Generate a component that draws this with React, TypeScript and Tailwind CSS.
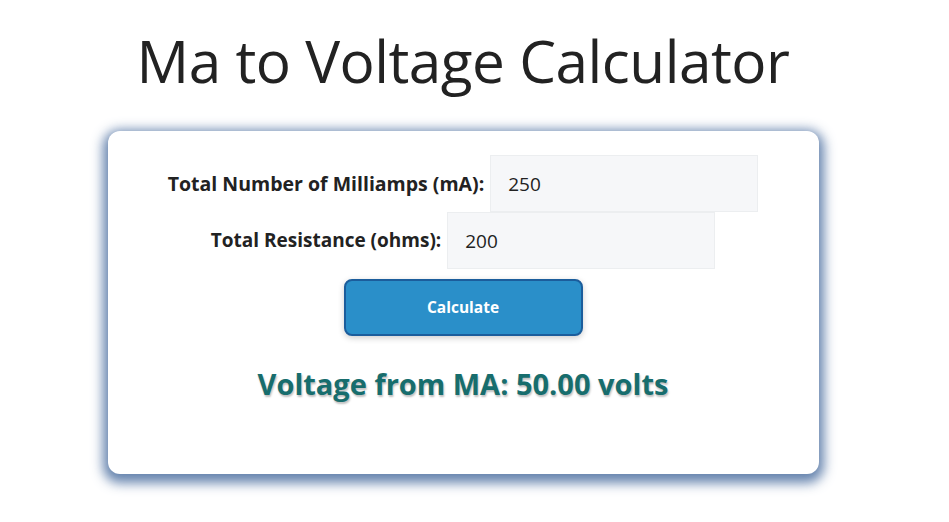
import React, { useState } from 'react';

export default function App() {
  const [ma, setMa] = useState('250');
  const [ohms, setOhms] = useState('200');
  const [result, setResult] = useState('50.00');

  const calculate = () => {
    const v = (parseFloat(ma) / 1000) * parseFloat(ohms);
    setResult(isNaN(v) ? '0.00' : v.toFixed(2));
  };

  return (
    <div className="min-h-[522px] w-[926px] bg-white font-['Open_Sans',sans-serif] text-[#222]">
      <h1 className="pt-[18px] text-center text-[58.5px] font-normal leading-[84px] tracking-[-0.5px]">
        Ma to Voltage Calculator
      </h1>

      <div className="mx-auto mt-[29px] h-[343px] w-[711px] rounded-[12px] bg-white pt-[24px] shadow-[0_4px_12px_5px_rgba(75,110,160,0.85)]">
        <div className="flex items-center justify-center">
          <label className="mr-[6px] text-[19.5px] font-bold">Total Number of Milliamps (mA):</label>
          <input
            value={ma}
            onChange={(e) => setMa(e.target.value)}
            className="h-[57px] w-[268px] border border-[#eceef0] bg-[#f6f7f9] px-[17px] text-[19px] text-[#222] outline-none"
          />
        </div>
        <div className="flex items-center justify-center">
          <label className="mr-[6px] text-[19px] font-bold">Total Resistance (ohms):</label>
          <input
            value={ohms}
            onChange={(e) => setOhms(e.target.value)}
            className="h-[57px] w-[268px] border border-[#eceef0] bg-[#f6f7f9] px-[17px] text-[19px] text-[#222] outline-none"
          />
        </div>
        <div className="mt-[10px] flex justify-center">
          <button
            onClick={calculate}
            className="h-[57px] w-[239px] rounded-[8px] border-2 border-[#1b5d9c] bg-[#2a8fc9] text-[15.5px] font-bold text-white shadow-[0_2px_6px_rgba(0,0,0,0.2)]"
          >
            Calculate
          </button>
        </div>
        <p className="mt-[26px] text-center text-[29px] font-bold text-[#176d6d] [text-shadow:1px_2px_2px_rgba(0,0,0,0.25)]">
          Voltage from MA: {result} volts
        </p>
      </div>
    </div>
  );
}
